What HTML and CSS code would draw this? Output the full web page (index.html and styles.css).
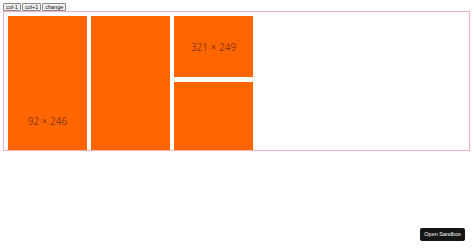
FILE: index.html
```html
<!DOCTYPE html>
<html>
<head>
<meta charset="utf-8">
<link rel="stylesheet" href="styles.css">
</head>
<body>
<div class="toolbar">
  <button class="btn">col-1</button><button class="btn">col+1</button><button class="btn">change</button>
</div>
<div class="board">
  <div class="col">
    <div class="tile t1">92 × 246</div>
  </div>
  <div class="col">
    <div class="tile t2">92 × 246</div>
  </div>
  <div class="col">
    <div class="tile t3">321 × 249</div>
    <div class="tile t4">321 × 249</div>
  </div>
</div>
<a class="sandbox">Open Sandbox</a>
</body>
</html>
```
FILE: styles.css
```css
html, body {
  margin: 0;
  padding: 0;
  background: #fff;
}
body {
  padding: 3px 4px 0 3px;
  font-family: "Open Sans", "Noto Sans", sans-serif;
}
.toolbar {
  display: flex;
  height: 8px;
}
.btn {
  font-family: "Liberation Sans", Arial, sans-serif;
  font-size: 5.5px;
  line-height: 6px;
  height: 8px;
  padding: 0 2px;
  margin: 0 1px 0 0;
  border: 1px solid #8a8a8a;
  border-radius: 1px;
  background: #efefef;
  color: #111;
}
.board {
  border: 1px solid #f4b0c0;
  height: 134px;
  padding: 4px 4px 0 4px;
  display: flex;
  gap: 4px;
  overflow: hidden;
  align-items: flex-start;
}
.col {
  width: 79px;
  display: flex;
  flex-direction: column;
  gap: 5px;
}
.tile {
  background: #ff6600;
  color: rgba(80, 25, 0, 0.68);
  font-size: 10px;
  display: flex;
  align-items: center;
  justify-content: center;
}
.t1, .t2 { height: 210px; }
.t2 { color: transparent; }
.t3 { height: 61px; }
.t4 { height: 80px; color: transparent; }
.sandbox {
  position: fixed;
  right: 9px;
  bottom: 7px;
  background: #151515;
  color: #fff;
  font-family: "Liberation Sans", Arial, sans-serif;
  font-size: 5.5px;
  line-height: 13px;
  padding: 0 4px;
  border-radius: 2px;
}
```
